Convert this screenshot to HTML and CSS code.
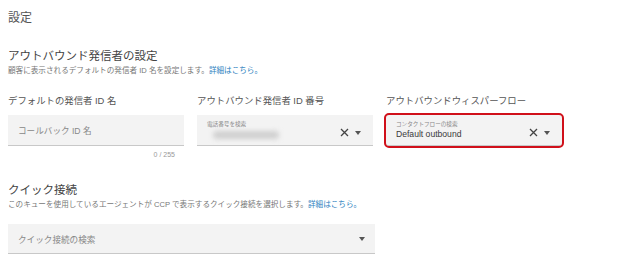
FILE: index.html
```html
<!DOCTYPE html>
<html lang="ja">
<head>
  <meta charset="UTF-8">
  <title>設定</title>
  <link rel="stylesheet" href="styles.css">
</head>
<body>
  <div class="page">
    <h1 class="title">設定</h1>

    <h2 class="section-title first">アウトバウンド発信者の設定</h2>
    <p class="section-desc">顧客に表示されるデフォルトの発信者 ID 名を設定します。<a>詳細はこちら。</a></p>

    <div class="fields">
      <div class="field">
        <div class="label">デフォルトの発信者 ID 名</div>
        <div class="box">
          <span class="placeholder">コールバック ID 名</span>
        </div>
        <div class="counter">0 / 255</div>
      </div>

      <div class="field">
        <div class="label">アウトバウンド発信者 ID 番号</div>
        <div class="box select">
          <div class="select-text">
            <div class="mini">電話番号を検索</div>
            <div class="value"><span class="blurred"></span></div>
          </div>
          <span class="clear">
            <svg width="9" height="9" viewBox="0 0 9 9"><path d="M1 1 L8 8 M8 1 L1 8" stroke="#444" stroke-width="1.3"/></svg>
          </span>
          <span class="caret"></span>
        </div>
      </div>

      <div class="field">
        <div class="label">アウトバウンドウィスパーフロー</div>
        <div class="box select error">
          <div class="select-text">
            <div class="mini">コンタクトフローの検索</div>
            <div class="value">Default outbound</div>
          </div>
          <span class="clear">
            <svg width="9" height="9" viewBox="0 0 9 9"><path d="M1 1 L8 8 M8 1 L1 8" stroke="#444" stroke-width="1.3"/></svg>
          </span>
          <span class="caret"></span>
        </div>
      </div>
    </div>

    <h2 class="section-title second">クイック接続</h2>
    <p class="section-desc">このキューを使用しているエージェントが CCP で表示するクイック接続を選択します。<a>詳細はこちら。</a></p>

    <div class="box wide">
      <span class="placeholder">クイック接続の検索</span>
      <span class="caret"></span>
    </div>
  </div>
</body>
</html>
```

FILE: styles.css
```css
* { box-sizing: border-box; }
body {
  margin: 0; background: #fff; color: #444;
  font-family: "Liberation Sans", "Noto Sans CJK JP", sans-serif;
}
.page { padding: 8px 8px 0 8px; }

.title {
  margin: 0; font-size: 12px; line-height: 20px;
  font-weight: normal; color: #555;
}
.section-title {
  margin: 0; font-size: 11.5px; line-height: 18px;
  font-weight: normal; color: #444;
}
.section-title.first { margin-top: 19px; }
.section-title.second { margin-top: 21px; }
.section-desc {
  margin: 0; font-size: 7.6px; line-height: 12px; color: #777;
}
.section-desc a { color: #2e7fc0; }

.fields {
  display: grid;
  grid-template-columns: repeat(3, 176px);
  gap: 13px;
  margin-top: 17px;
}
.label {
  font-size: 9.4px; line-height: 14px; color: #555;
  margin-bottom: 7px;
}
.box {
  height: 31px;
  background: #f3f3f3;
  border-bottom: 1px solid #c8c8c8;
  display: flex; align-items: center;
  padding: 0 12px 0 10px;
}
.placeholder { font-size: 8.6px; color: #888; }
.counter {
  margin-top: 4px; text-align: right; padding-right: 9px;
  font-size: 7px; line-height: 10px; color: #999;
}

.select { align-items: flex-start; padding-top: 5px; }
.select-text { flex: 1; min-width: 0; }
.mini { font-size: 5.6px; line-height: 8px; color: #888; }
.value { font-size: 8.6px; line-height: 12px; color: #3a3a3a; }
.blurred {
  display: inline-block; width: 66px; height: 8px; margin: 3px 0 0 6px;
  background: #cfcfcf; border-radius: 4px; filter: blur(2.5px);
}
.clear { display: flex; margin-top: 8px; margin-right: 6px; }
.caret {
  width: 0; height: 0; margin-top: 11px;
  border-left: 3.5px solid transparent;
  border-right: 3.5px solid transparent;
  border-top: 4px solid #555;
}
.error {
  outline: 2px solid #d0101a;
  border-radius: 3px;
}

.wide {
  width: 367px; height: 30px; margin-top: 13px;
  justify-content: space-between; padding-right: 10px;
}
.wide .caret { margin-top: 0; }
```
